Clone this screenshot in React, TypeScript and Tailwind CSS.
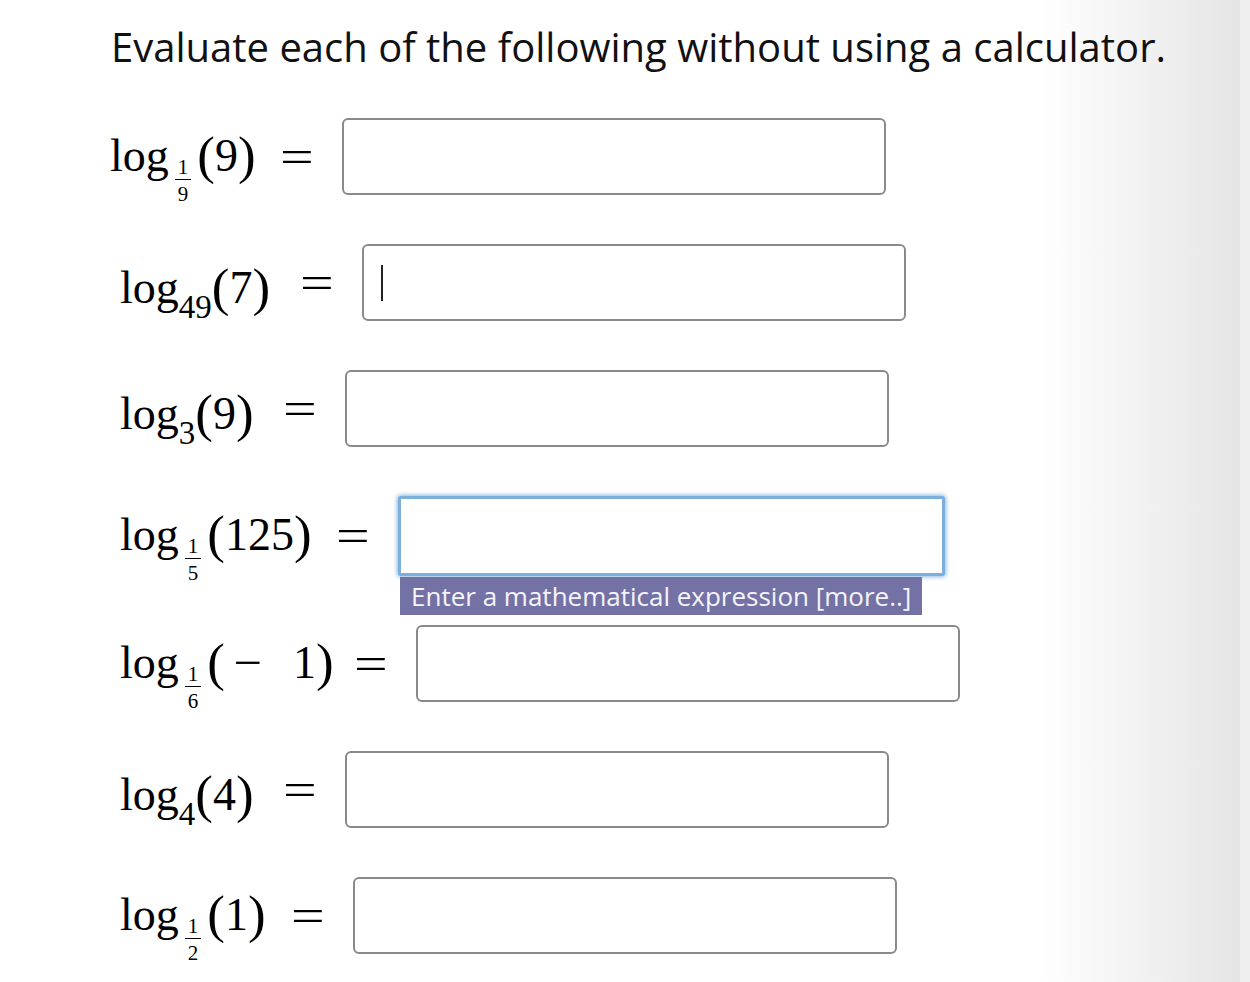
import React from "react";

const serif = "font-['Liberation_Serif','Times_New_Roman',serif]";

function Frac({ num, den }: { num: string; den: string }) {
  return (
    <span className={`${serif} mx-[6px] inline-flex flex-col items-center align-[-3px] text-[21px] leading-none`}>
      <span className="border-b-[1.5px] border-black px-[3px] pb-[1px]">{num}</span>
      <span className="pt-[4px]">{den}</span>
    </span>
  );
}

function Sub({ children }: { children: React.ReactNode }) {
  return <span className={`${serif} align-[-15px] text-[33px] leading-none`}>{children}</span>;
}

function Paren({ c }: { c: string }) {
  return <span className="align-[-2px] text-[53px] leading-none">{c}</span>;
}

function Row({
  base,
  arg,
  labelW,
  indent,
  focused,
  caret,
}: {
  base: React.ReactNode;
  arg: React.ReactNode;
  labelW: string;
  indent: string;
  focused?: boolean;
  caret?: boolean;
}) {
  return (
    <div className={`flex items-center ${focused ? "h-[80px]" : "h-[77px]"} ${indent}`}>
      <div className={`flex h-full shrink-0 items-center ${labelW}`}>
        <span className={`${serif} whitespace-pre pt-[20px] text-[46px] leading-none text-black`}>
          log{base}
          <Paren c="(" />
          {arg}
          <Paren c=")" />
        </span>
        <span className={`${serif} ml-auto mr-[32px] inline-block scale-x-[1.3] text-[46px] leading-none text-black`}>
          =
        </span>
      </div>
      {focused ? (
        <div className="relative">
          <div className="h-[80px] w-[547px] rounded-[3px] border-[3px] border-[#7cb0dc] bg-white shadow-[0_0_4px_1px_rgba(90,150,210,0.7)]" />
          <div className="absolute left-[2px] top-[81px] whitespace-nowrap bg-[#7472a4] px-[11px] py-[3px] font-['Open_Sans',sans-serif] text-[26px] leading-[32px] text-[#f4f4fa]">
            Enter a mathematical expression [more..]
          </div>
        </div>
      ) : (
        <div className="flex h-[77px] w-[544px] items-center rounded-[6px] border-2 border-[#8a8a8a] bg-white">
          {caret && <span className="ml-[17px] h-[36px] w-[2px] bg-[#222]" />}
        </div>
      )}
    </div>
  );
}

export default function App() {
  return (
    <div className="min-h-[982px] w-full bg-[linear-gradient(to_right,#ffffff_83%,#e5e5e5_99.2%,#efefef_99.2%)] pb-[30px]">
      <h1 className="pl-[111px] pt-[23px] font-['Open_Sans',sans-serif] text-[40px] font-normal leading-[48px] text-[#111]">
        Evaluate each of the following without using a calculator.
      </h1>
      <div className="mt-[47px] flex flex-col gap-[49px]">
        <Row indent="pl-[110px]" labelW="w-[232px]" base={<Frac num="1" den="9" />} arg="9" />
        <Row indent="pl-[120px]" labelW="w-[242px]" base={<Sub>49</Sub>} arg="7" caret />
        <Row indent="pl-[120px]" labelW="w-[225px]" base={<Sub>3</Sub>} arg="9" />
        <Row indent="pl-[120px]" labelW="w-[278px]" base={<Frac num="1" den="5" />} arg="125" focused />
        <Row
          indent="pl-[120px]"
          labelW="w-[296px]"
          base={<Frac num="1" den="6" />}
          arg={
            <>
              <span className="ml-[10px] mr-[10px] inline-block scale-x-[1.1]">−</span>
              <span className="ml-[22px]">1</span>
            </>
          }
        />
        <Row indent="pl-[120px]" labelW="w-[225px]" base={<Sub>4</Sub>} arg="4" />
        <Row indent="pl-[120px]" labelW="w-[233px]" base={<Frac num="1" den="2" />} arg="1" />
      </div>
    </div>
  );
}
